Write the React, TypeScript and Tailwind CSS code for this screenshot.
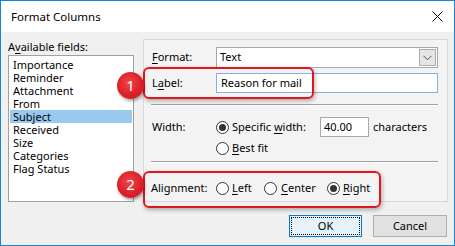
import React from "react";

const font = { fontFamily: '"Noto Sans", "Open Sans", Arial, sans-serif' };

function Radio({ checked }: { checked?: boolean }) {
  return (
    <span className="w-[13px] h-[13px] rounded-full border border-[#333333] bg-white flex items-center justify-center shrink-0">
      {checked && <span className="w-[7px] h-[7px] rounded-full bg-[#333333]" />}
    </span>
  );
}

function Badge({ n, top }: { n: string; top: string }) {
  return (
    <div
      className={`absolute left-[116px] ${top} w-[27px] h-[27px] rounded-full flex items-center justify-center text-white text-[15px] shadow-[1px_2px_3px_rgba(0,0,0,0.35)] bg-[radial-gradient(circle_at_45%_40%,#f0474b_0%,#dc2027_55%,#c4161d_100%)]`}
    >
      {n}
    </div>
  );
}

export default function App() {
  const items = [
    "Importance",
    "Reminder",
    "Attachment",
    "From",
    "Subject",
    "Received",
    "Size",
    "Categories",
    "Flag Status",
  ];
  return (
    <div
      className="relative w-[455px] h-[246px] border border-[#1883d7] flex flex-col text-[11px] text-black bg-[#f0f0f0] overflow-hidden"
      style={font}
    >
      {/* Title bar */}
      <div className="h-[31px] bg-white flex items-center justify-between pl-[10px] pr-[10px] shrink-0">
        <span className="text-[11.5px] leading-none">Format Columns</span>
        <svg width="11" height="11" viewBox="0 0 11 11" className="mr-[1px]">
          <path d="M0.5 0.5 L10.5 10.5 M10.5 0.5 L0.5 10.5" stroke="#000" strokeWidth="1" />
        </svg>
      </div>

      {/* Body */}
      <div className="flex-1 flex flex-col pt-[7px] pl-[7px] pr-[6px] pb-[8px]">
        <div className="flex h-[163px] gap-[9px]">
          {/* Left column */}
          <div className="w-[126px] flex flex-col">
            <div className="h-[16px] leading-[16px]">
              A<span className="underline underline-offset-2">v</span>ailable fields:
            </div>
            <div className="h-[147px] border border-[#a0a0a0] bg-white pt-[2px] px-[1px]">
              {items.map((it) => (
                <div
                  key={it}
                  className={`h-[13px] leading-[13px] pl-[3px] ${it === "Subject" ? "bg-[#99c9ef]" : ""}`}
                >
                  {it}
                </div>
              ))}
            </div>
          </div>

          {/* Right panel */}
          <div className="w-[305px] h-[163px] border border-[#d9d9d9] bg-[#f3f3f3] flex flex-col pt-[7px] pl-[8px]">
            {/* Format */}
            <div className="flex items-center h-[21px]">
              <div className="w-[64px]">
                <span className="underline underline-offset-2">F</span>ormat:
              </div>
              <div className="w-[222px] h-[21px] border border-[#a8a8a8] bg-white flex items-center justify-between pl-[3px] pr-[1px]">
                <span>Text</span>
                <span className="w-[17px] h-[17px] border border-[#adadad] bg-[#e5e5e5] flex items-center justify-center">
                  <svg width="9" height="6" viewBox="0 0 9 6">
                    <path d="M0.5 0.8 L4.5 4.8 L8.5 0.8" stroke="#555" strokeWidth="1" fill="none" />
                  </svg>
                </span>
              </div>
            </div>
            {/* Label */}
            <div className="flex items-center h-[20px] mt-[5px]">
              <div className="w-[64px]">
                L<span className="underline underline-offset-2">a</span>bel:
              </div>
              <div className="w-[222px] h-[20px] border border-[#7eb4ea] bg-white flex items-center pl-[4px]">
                Reason for mail
              </div>
            </div>
            {/* Separator */}
            <div className="mt-[11px] ml-[-1px] w-[287px] h-[2px] border-t border-[#a0a0a0] border-b-white border-b" />
            {/* Width */}
            <div className="flex items-center h-[20px] mt-[11px]">
              <div className="w-[64px]">Width:</div>
              <Radio checked />
              <span className="ml-[3px] w-[88px]">
                Specific <span className="underline underline-offset-2">w</span>idth:
              </span>
              <div className="w-[49px] h-[20px] border border-[#a8a8a8] bg-white flex items-center pl-[3px]">
                40.00
              </div>
              <span className="ml-[4px]">characters</span>
            </div>
            <div className="flex items-center h-[14px] mt-[4px]">
              <div className="w-[64px]" />
              <Radio />
              <span className="ml-[3px]">
                <span className="underline underline-offset-2">B</span>est fit
              </span>
            </div>
            {/* Separator */}
            <div className="mt-[6px] ml-[-1px] w-[287px] h-[2px] border-t border-[#a0a0a0] border-b-white border-b" />
            {/* Alignment */}
            <div className="flex items-center h-[20px] mt-[15px] ml-[-1px]">
              <div className="w-[65px]">Alignment:</div>
              <div className="w-[48px] flex items-center">
                <Radio />
                <span className="ml-[3px]">
                  <span className="underline underline-offset-2">L</span>eft
                </span>
              </div>
              <div className="w-[63px] flex items-center">
                <Radio />
                <span className="ml-[4px]">
                  <span className="underline underline-offset-2">C</span>enter
                </span>
              </div>
              <div className="flex items-center">
                <Radio checked />
                <span className="ml-[3px]">
                  <span className="underline underline-offset-2">R</span>ight
                </span>
              </div>
            </div>
          </div>
        </div>

        {/* Buttons */}
        <div className="flex justify-end gap-[11px] mt-[13px] pr-[1px]">
          <div className="w-[73px] h-[22px] border border-[#0078d7] bg-[#e5f1fb] p-[1px]">
            <div className="w-full h-full border border-dotted border-black flex items-center justify-center">
              OK
            </div>
          </div>
          <div className="w-[74px] h-[22px] border border-[#adadad] bg-[#e1e1e1] flex items-center justify-center">
            Cancel
          </div>
        </div>
      </div>

      {/* Annotations */}
      <div className="absolute left-[142px] top-[66px] w-[171px] h-[32px] border-2 border-[#e3161d] rounded-[6px] shadow-[1px_2px_4px_rgba(0,0,0,0.3)]" />
      <div className="absolute left-[142px] top-[170px] w-[238px] h-[37px] border-2 border-[#e3161d] rounded-[6px] shadow-[1px_2px_4px_rgba(0,0,0,0.3)]" />
      <Badge n="1" top="top-[71px]" />
      <Badge n="2" top="top-[170px]" />
    </div>
  );
}
